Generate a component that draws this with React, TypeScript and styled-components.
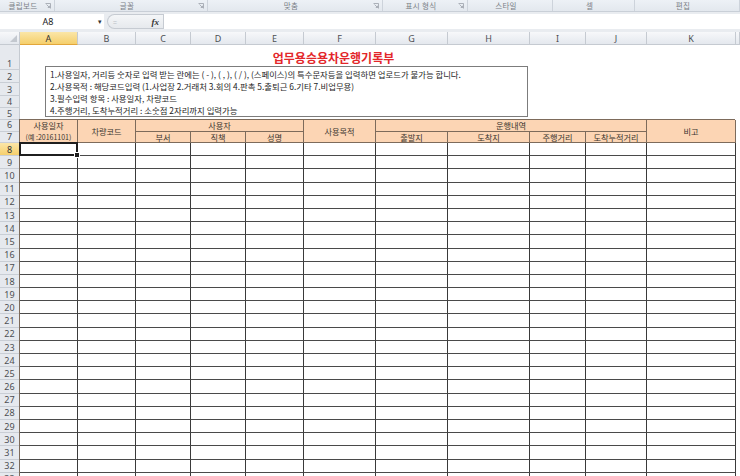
import React from 'react'
import styled, { createGlobalStyle, css } from 'styled-components'

const COLS = [58, 58, 55, 55, 58, 72, 72, 82, 56, 61, 89]
const LETTERS = ['A', 'B', 'C', 'D', 'E', 'F', 'G', 'H', 'I', 'J', 'K']
const TOP_ROWS = [25, 13, 13, 12, 12]
const HEAD_ROWS = [11.5, 11.5]
const DATA_ROW = 13.2
const DATA_COUNT = 26

const GROUPS = [
    { label: '클립보드', width: 55, launcher: true },
    { label: '글꼴', width: 153, launcher: true },
    { label: '맞춤', width: 175, launcher: true },
    { label: '표시 형식', width: 85, launcher: true },
    { label: '스타일', width: 85, launcher: false },
    { label: '셀', width: 82, launcher: false },
    { label: '편집', width: 105, launcher: false },
]

const NOTES = [
    '1.사용일자, 거리등 숫자로 입력 받는 란에는 ( - ), ( , ), ( / ), (스페이스)의 특수문자등을 입력하면 업로드가 불가능 합니다.',
    '2.사용목적 : 해당코드입력 (1.사업장 2.거래처 3.회의 4.판촉 5.출퇴근 6.기타 7.비업무용)',
    '3.필수입력 항목 : 사용일자, 차량코드',
    '4.주행거리, 도착누적거리 : 소숫점 2자리까지 입력가능',
]

const colTemplate = COLS.map((c) => c + 'px').join(' ')
const rowHeights = [...TOP_ROWS, ...HEAD_ROWS, ...Array(DATA_COUNT).fill(DATA_ROW)]

const GlobalStyle = createGlobalStyle`
    html, body {
        margin: 0;
        padding: 0;
        background: #ffffff;
        overflow: hidden;
    }
    body {
        font-family: "Noto Sans CJK KR", "Noto Sans", sans-serif;
        color: #222;
    }
`

const Launcher = () => (
    <svg width="6" height="6" viewBox="0 0 6 6">
        <path d="M0.5 0.5h5v5" fill="none" stroke="#9aa0a8" strokeWidth="0.8" />
        <path d="M1.5 1.5l3 3M2.8 4.5h1.7v-1.7" fill="none" stroke="#9aa0a8" strokeWidth="0.8" />
    </svg>
)

const App = () => {
    return (
        <>
            <GlobalStyle />
            <Ribbon>
                {GROUPS.map((g) => (
                    <Group key={g.label} $width={g.width}>
                        <span className="label">{g.label}</span>
                        {g.launcher && (
                            <span className="launcher">
                                <Launcher />
                            </span>
                        )}
                    </Group>
                ))}
            </Ribbon>
            <FormulaBar>
                <NameBox>
                    <span>A8</span>
                    <span className="arrow">▾</span>
                </NameBox>
                <FxPill>
                    <span className="grip">=</span>
                    <span className="fx">fx</span>
                </FxPill>
                <FormulaInput />
            </FormulaBar>
            <Sheet>
                <Corner />
                {LETTERS.map((l) => (
                    <ColHeader key={l} $active={l === 'A'}>
                        {l}
                    </ColHeader>
                ))}
                <ColHeader $active={false} />
                {rowHeights.map((_, i) => (
                    <RowHeader key={i} $row={i + 2} $active={i + 1 === 8}>
                        {i + 1}
                    </RowHeader>
                ))}
                <TopArea>
                    <Title>업무용승용차운행기록부</Title>
                    <NotesBox>
                        {NOTES.map((n) => (
                            <p key={n}>{n}</p>
                        ))}
                    </NotesBox>
                </TopArea>
                <Table>
                    <HeadCell $col="1" $row="1 / span 2">
                        <span>사용일자</span>
                        <span className="sub">(예 :20161101)</span>
                    </HeadCell>
                    <HeadCell $col="2" $row="1 / span 2">차량코드</HeadCell>
                    <HeadCell $col="3 / span 3" $row="1">사용자</HeadCell>
                    <HeadCell $col="3" $row="2">부서</HeadCell>
                    <HeadCell $col="4" $row="2">직책</HeadCell>
                    <HeadCell $col="5" $row="2">성명</HeadCell>
                    <HeadCell $col="6" $row="1 / span 2">사용목적</HeadCell>
                    <HeadCell $col="7 / span 4" $row="1">운행내역</HeadCell>
                    <HeadCell $col="7" $row="2">출발지</HeadCell>
                    <HeadCell $col="8" $row="2">도착지</HeadCell>
                    <HeadCell $col="9" $row="2">주행거리</HeadCell>
                    <HeadCell $col="10" $row="2">도착누적거리</HeadCell>
                    <HeadCell $col="11" $row="1 / span 2">비고</HeadCell>
                    {Array.from({ length: DATA_COUNT }).map((_, r) =>
                        COLS.map((_, c) => (
                            <DataCell key={r + '-' + c} $selected={r === 0 && c === 0} />
                        ))
                    )}
                </Table>
            </Sheet>
        </>
    )
}

export default App

const Ribbon = styled.div`
    display: flex;
    height: 12px;
    background: linear-gradient(#edf1f6, #e3e8ee);
    border-bottom: 1px solid #c9cfd7;
    box-sizing: border-box;
`

const Group = styled.div<{ $width: number }>`
    position: relative;
    display: flex;
    align-items: center;
    justify-content: center;
    width: ${(p) => p.$width}px;
    flex: none;
    border-right: 1px solid #cdd3db;
    box-sizing: border-box;
    padding-right: 8px;

    .label {
        font-size: 7.5px;
        line-height: 11px;
        color: #7a7f86;
        letter-spacing: 0.3px;
    }
    .launcher {
        position: absolute;
        right: 3px;
        top: 3px;
        display: flex;
    }
`

const FormulaBar = styled.div`
    display: flex;
    height: 20px;
    padding: 2px 0 3px;
    box-sizing: border-box;
    background: #e9ecf0;
`

const NameBox = styled.div`
    position: relative;
    width: 104px;
    flex: none;
    background: #fff;
    display: flex;
    align-items: center;
    justify-content: center;
    font-family: "Noto Sans", sans-serif;
    font-size: 9px;
    color: #222;
    padding-right: 8px;
    box-sizing: border-box;

    .arrow {
        position: absolute;
        right: 2px;
        font-size: 7px;
        color: #333;
    }
`

const FxPill = styled.div`
    display: flex;
    align-items: center;
    justify-content: space-between;
    width: 56px;
    margin-left: 3px;
    flex: none;
    background: linear-gradient(#f4f6f8, #e6e9ed);
    border: 1px solid #c6cbd2;
    border-right: none;
    border-radius: 8px 0 0 8px;
    box-sizing: border-box;
    padding: 0 4px 0 5px;

    .grip {
        font-size: 7px;
        color: #b8bdc4;
    }
    .fx {
        font-family: "Liberation Serif", serif;
        font-style: italic;
        font-weight: bold;
        font-size: 9px;
        color: #333;
    }
`

const FormulaInput = styled.div`
    flex: 1;
    background: #fff;
    border-left: 1px solid #c6cbd2;
`

const Sheet = styled.div`
    display: grid;
    grid-template-columns: 20px ${colTemplate} 1fr;
    grid-template-rows: 13px ${rowHeights.map((h) => h + 'px').join(' ')};
`

const headerBg = css`
    background: linear-gradient(#f7f8fa, #e4e8ee);
    color: #4d4f53;
    font-family: "Noto Sans", sans-serif;
    font-size: 9px;
`

const activeBg = css`
    background: linear-gradient(#fbe6a8, #f5cf6c);
    color: #333;
`

const Corner = styled.div`
    position: relative;
    grid-column: 1;
    grid-row: 1;
    ${headerBg};
    border-right: 1px solid #c5cad1;
    border-bottom: 1px solid #c5cad1;
    box-sizing: border-box;

    &::after {
        content: '';
        position: absolute;
        right: 2px;
        bottom: 2px;
        border-style: solid;
        border-width: 0 0 7px 7px;
        border-color: transparent transparent #c3c8cf transparent;
    }
`

const ColHeader = styled.div<{ $active: boolean }>`
    grid-row: 1;
    display: flex;
    align-items: center;
    justify-content: center;
    ${headerBg};
    ${(p) => p.$active && activeBg};
    border-right: 1px solid #c5cad1;
    border-bottom: 1px solid ${(p) => (p.$active ? '#e2a63a' : '#c5cad1')};
    box-sizing: border-box;
`

const RowHeader = styled.div<{ $row: number; $active: boolean }>`
    grid-column: 1;
    grid-row: ${(p) => p.$row};
    display: flex;
    align-items: flex-end;
    justify-content: center;
    ${headerBg};
    background: #e6e9ee;
    ${(p) => p.$active && activeBg};
    line-height: 10.5px;
    border-right: 1px solid ${(p) => (p.$active ? '#e2a63a' : '#c5cad1')};
    border-bottom: 1px solid #c9ced5;
    box-sizing: border-box;
`

const TopArea = styled.div`
    position: relative;
    grid-column: 2 / -1;
    grid-row: 2 / span ${TOP_ROWS.length};
    background: #fff;
`

const Title = styled.h1`
    width: 627px;
    margin: 0;
    padding-top: 5px;
    text-align: center;
    font-size: 12px;
    line-height: 16px;
    font-weight: bold;
    color: #e3262a;
    letter-spacing: 0;
`

const NotesBox = styled.div`
    position: absolute;
    left: 25px;
    top: 21px;
    width: 483px;
    height: 51px;
    box-sizing: border-box;
    border: 1px solid #7c7c7c;
    background: #fff;
    padding: 1px 0 0 4px;

    p {
        margin: 0;
        font-size: 8.4px;
        line-height: 12px;
        color: #1e1e1e;
        white-space: nowrap;
    }
`

const Table = styled.div`
    position: relative;
    z-index: 1;
    grid-column: 2 / span ${COLS.length};
    grid-row: ${TOP_ROWS.length + 2} / -1;
    display: grid;
    grid-template-columns: ${colTemplate};
    grid-template-rows: ${[...HEAD_ROWS, ...Array(DATA_COUNT).fill(DATA_ROW)].map((h) => h + 'px').join(' ')};
    box-shadow: -1px -1px 0 #7d6b5b;
`

const HeadCell = styled.div<{ $col: string; $row: string }>`
    grid-column: ${(p) => p.$col};
    grid-row: ${(p) => p.$row};
    display: flex;
    flex-direction: column;
    align-items: center;
    justify-content: center;
    background: #fcd5b4;
    border-right: 1px solid #7d6b5b;
    border-bottom: 1px solid #7d6b5b;
    box-sizing: border-box;
    font-size: 8.2px;
    line-height: 10px;
    color: #3b3530;
    white-space: nowrap;

    .sub {
        font-size: 7px;
        line-height: 10px;
        margin-top: 2px;
    }
`

const DataCell = styled.div<{ $selected: boolean }>`
    position: relative;
    background: #fff;
    border-right: 1px solid #3a3a3a;
    border-bottom: 1px solid #4a4a4a;
    box-sizing: border-box;

    ${(p) =>
        p.$selected &&
        css`
            &::after {
                content: '';
                position: absolute;
                inset: -1px -1px -1px -1px;
                border: 2px solid #1f1f1f;
                pointer-events: none;
            }
            &::before {
                content: '';
                position: absolute;
                right: -3px;
                bottom: -3px;
                width: 4px;
                height: 4px;
                background: #1f1f1f;
                border: 1px solid #fff;
                z-index: 2;
            }
        `}
`
